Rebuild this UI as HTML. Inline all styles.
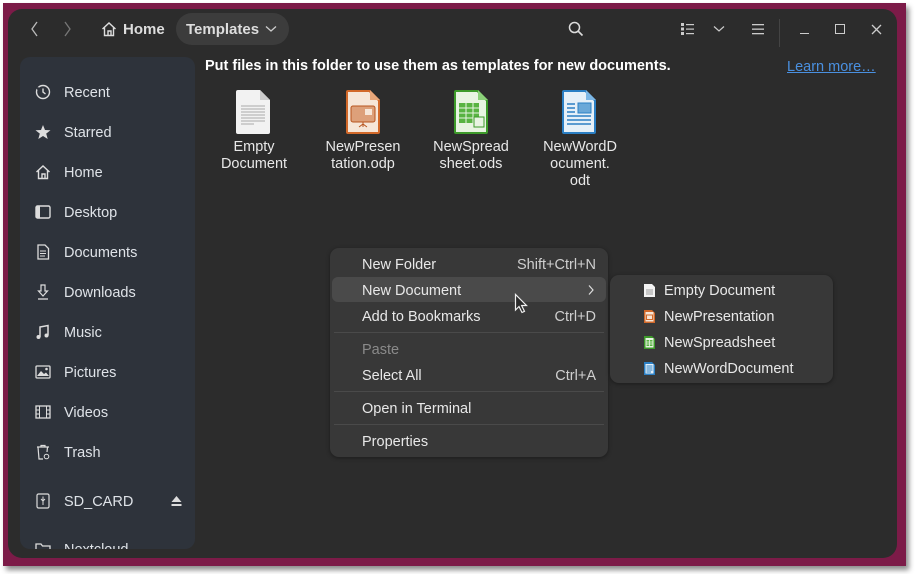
<!DOCTYPE html>
<html><head><style>
*{margin:0;padding:0;box-sizing:border-box}
body{width:915px;height:574px;background:#fff;position:relative;overflow:hidden;font-family:"Liberation Sans","DejaVu Sans",sans-serif;font-size:14px;color:#e8e8e8}
.frame{position:absolute;left:3px;top:3px;width:903px;height:563px;background:#7c1b48;box-shadow:3px 4px 5px rgba(0,0,0,.45)}
.win{position:absolute;left:8px;top:9px;width:889px;height:549px;background:#2c2c2c;border-radius:14px;overflow:hidden}
.abs{position:absolute}
.side{position:absolute;left:12px;top:48px;width:175px;height:492px;background:#2e333b;border-radius:10px;overflow:hidden}
.si{position:absolute;left:0;height:20px;line-height:20px;font-size:14.5px;color:#dfe3e8}
.si span{position:absolute;left:44px;white-space:nowrap;margin-top:1px}
.si svg{position:absolute;left:15px;top:2px}
.t{position:absolute;white-space:nowrap;margin-top:1px}
.menu{position:absolute;left:330px;top:248px;width:278px;height:209px;background:#383838;border-radius:9px;box-shadow:0 1px 4px rgba(0,0,0,.4)}
.mi{position:absolute;left:32px;font-size:14.5px;white-space:nowrap;margin-top:1px}
.sc{position:absolute;right:12px;font-size:14.5px;color:#cfcfcf;margin-top:1px}
.sep{position:absolute;left:4px;right:4px;height:1px;background:#4a4a4a}
.sub{position:absolute;left:610px;top:275px;width:223px;height:108px;background:#383838;border-radius:9px;box-shadow:0 1px 4px rgba(0,0,0,.4)}
.lbl{position:absolute;text-align:center;font-size:14.5px;line-height:17px;color:#e8e8e8;margin-top:1px}
</style></head><body>
<div class="frame"></div>
<div class="win">
 <svg class="abs" style="left:22px;top:12px" width="10" height="16"><path d="M7 1 L2 8 L7 15" stroke="#bbb" fill="none" stroke-width="1.3"/></svg>
 <svg class="abs" style="left:55px;top:12px" width="10" height="16"><path d="M2 1 L7 8 L2 15" stroke="#777" fill="none" stroke-width="1.3"/></svg>
 <svg class="abs" style="left:93px;top:12px" width="16" height="16"><path d="M1.5 8 L8 2 L14.5 8 M3.5 6.5 V14.5 H12.5 V6.5 M7 14.5 V10 H10 V14.5" stroke="#ddd" fill="none" stroke-width="1.4"/></svg>
 <div class="t" style="left:115px;top:11px;font-size:15px;font-weight:bold;color:#ddd">Home</div>
 <div class="abs" style="left:168px;top:4px;width:113px;height:32px;border-radius:16px;background:#3c3c3c"></div>
 <div class="t" style="left:178px;top:11px;font-size:15px;font-weight:bold;color:#ddd">Templates</div>
 <svg class="abs" style="left:257px;top:16px" width="12" height="8"><path d="M1 1.5 L6 6 L11 1.5" stroke="#ccc" fill="none" stroke-width="1.3"/></svg>
 <svg class="abs" style="left:560px;top:12px" width="16" height="16"><circle cx="6.5" cy="6.5" r="5" stroke="#ddd" fill="none" stroke-width="1.5"/><path d="M10 10 L14.5 14.5" stroke="#ddd" stroke-width="1.6"/></svg>
 <svg class="abs" style="left:672px;top:13px" width="16" height="14"><g fill="#ccc"><rect x="1" y="1" width="3" height="3"/><rect x="1" y="5.5" width="3" height="3"/><rect x="1" y="10" width="3" height="3"/><rect x="6" y="2" width="8" height="1.2"/><rect x="6" y="6.5" width="8" height="1.2"/><rect x="6" y="11" width="8" height="1.2"/></g></svg>
 <svg class="abs" style="left:705px;top:16px" width="12" height="8"><path d="M1 1.5 L6 6 L11 1.5" stroke="#ccc" fill="none" stroke-width="1.2"/></svg>
 <svg class="abs" style="left:743px;top:13px" width="14" height="14"><g fill="#ccc"><rect x="1" y="2" width="12" height="1.3"/><rect x="1" y="6.5" width="12" height="1.3"/><rect x="1" y="11" width="12" height="1.3"/></g></svg>
 <div class="abs" style="left:771px;top:10px;width:1px;height:28px;background:#444"></div>
 <div class="abs" style="left:792px;top:24px;width:9px;height:1.3px;background:#ccc"></div>
 <div class="abs" style="left:827px;top:15px;width:10px;height:10px;border:1.3px solid #ccc"></div>
 <svg class="abs" style="left:863px;top:15px" width="11" height="11"><path d="M1 1 L10 10 M10 1 L1 10" stroke="#ccc" stroke-width="1.3"/></svg>

 <div class="side">
  <div class="si" style="top:25px"><svg width="16" height="16"><circle cx="8" cy="8" r="6.5" stroke="#ddd" fill="none" stroke-width="1.4"/><path d="M8 4.5 V8 L10.5 10" stroke="#ddd" fill="none" stroke-width="1.4"/><path d="M0.5 3 L2.5 6 L5 3.5" fill="#2e333b"/></svg><span>Recent</span></div>
  <div class="si" style="top:65px"><svg width="16" height="16"><path d="M8 1 L10 6 L15.5 6.2 L11.2 9.6 L12.7 15 L8 12 L3.3 15 L4.8 9.6 L.5 6.2 L6 6Z" fill="#ddd"/></svg><span>Starred</span></div>
  <div class="si" style="top:105px"><svg width="16" height="16"><path d="M1.5 8 L8 2 L14.5 8 M3.5 6.5 V14.5 H12.5 V6.5 M7 14.5 V10 H10 V14.5" stroke="#ddd" fill="none" stroke-width="1.4"/></svg><span>Home</span></div>
  <div class="si" style="top:145px"><svg width="16" height="16"><rect x="1" y="2" width="14" height="12" rx="1.5" stroke="#ddd" fill="none" stroke-width="1.4"/><rect x="1" y="2" width="4" height="12" fill="#ddd"/></svg><span>Desktop</span></div>
  <div class="si" style="top:185px"><svg width="16" height="16"><path d="M3 1 H10 L13.5 4.5 V15 H3Z" stroke="#ddd" fill="none" stroke-width="1.3"/><path d="M5 7 H11 M5 9.5 H11 M5 12 H10" stroke="#ddd"/></svg><span>Documents</span></div>
  <div class="si" style="top:225px"><svg width="16" height="16"><path d="M6 1 H10 V7 H12.5 L8 12 L3.5 7 H6Z" stroke="#ddd" fill="none" stroke-width="1.2"/><path d="M3 15 H13" stroke="#ddd" stroke-width="1.3"/></svg><span>Downloads</span></div>
  <div class="si" style="top:265px"><svg width="16" height="16"><path d="M5 13 V3 L13 1.5 V11.5" stroke="#ddd" fill="none" stroke-width="1.5"/><circle cx="3.5" cy="13" r="2" fill="#ddd"/><circle cx="11.5" cy="11.5" r="2" fill="#ddd"/></svg><span>Music</span></div>
  <div class="si" style="top:305px"><svg width="16" height="16"><rect x="1" y="2" width="14" height="12" rx="1" stroke="#ddd" fill="none" stroke-width="1.3"/><path d="M2 12 L6 7 L9 10 L11 8.5 L14 12Z" fill="#ddd"/><circle cx="11.5" cy="5" r="1.3" fill="#ddd"/></svg><span>Pictures</span></div>
  <div class="si" style="top:345px"><svg width="16" height="16"><rect x="1" y="2" width="14" height="12" stroke="#ddd" fill="none" stroke-width="1.3"/><path d="M4.5 2 V14 M11.5 2 V14 M1 6 H4.5 M1 10 H4.5 M11.5 6 H15 M11.5 10 H15" stroke="#ddd"/></svg><span>Videos</span></div>
  <div class="si" style="top:385px"><svg width="16" height="16"><path d="M2 3 H14 M6 3 V1.5 H10 V3 M3 3 L4 15 H8 M12.5 3 L12 8" stroke="#ddd" fill="none" stroke-width="1.2"/><circle cx="11.5" cy="12.5" r="2.3" stroke="#ddd" fill="none"/></svg><span>Trash</span></div>
  <div class="si" style="top:434px"><svg width="16" height="16"><rect x="2" y="1" width="12" height="14" rx="1.5" stroke="#ddd" fill="none" stroke-width="1.2"/><path d="M8 3.5 V12 M6 6 L8 8 L10 6" stroke="#ddd" fill="none"/></svg><span>SD_CARD</span>
   <svg style="left:151px;top:5px" width="11" height="10"><path d="M5.5 0 L10.5 6 H.5Z M.5 8 H10.5 V10 H.5Z" fill="#ddd"/></svg></div>
  <div class="si" style="top:482px"><svg width="16" height="16"><path d="M1 3 H6 L7.5 5 H15 V14 H1Z" stroke="#ddd" fill="none" stroke-width="1.3"/></svg><span>Nextcloud</span></div>
 </div>

 <div class="t" style="left:197px;top:48px;font-size:14.5px;font-weight:bold;color:#fff">Put files in this folder to use them as templates for new documents.</div>
 <div class="t" style="left:779px;top:49px;font-size:14.5px;color:#4a90e0;text-decoration:underline">Learn more…</div>

 <svg class="abs" style="left:226px;top:80px" width="38" height="46"><path d="M2 3 Q2 1 4 1 H26 L36 11 V43 Q36 45 34 45 H4 Q2 45 2 43Z" fill="#f2f2f2"/><path d="M26 1 V11 H36" fill="#ccc"/><g stroke="#aaa"><path d="M7 17 H31 M7 20 H31 M7 23 H31 M7 26 H31 M7 29 H31 M7 32 H31 M7 35 H20"/></g></svg>
 <div class="lbl" style="left:200px;top:129px;width:92px">Empty<br>Document</div>

 <svg class="abs" style="left:336px;top:80px" width="38" height="46"><path d="M2 3 Q2 1 4 1 H26 L36 11 V43 Q36 45 34 45 H4 Q2 45 2 43Z" fill="#d2692a"/><path d="M4 3 H25 L34 12 V43 H4Z" fill="#f6e6d8"/><path d="M26 1 V11 H36" fill="#e9a77a"/><rect x="7" y="17" width="24" height="16" rx="2" fill="#dda07a" stroke="#b8551f"/><path d="M19 33 V38 M15 38 L19 35 L23 38" stroke="#b8551f" fill="none"/><rect x="21" y="20" width="7" height="6" fill="#f6e6d8"/></svg>
 <div class="lbl" style="left:309px;top:129px;width:92px">NewPresen<br>tation.odp</div>

 <svg class="abs" style="left:444px;top:80px" width="38" height="46"><path d="M2 3 Q2 1 4 1 H26 L36 11 V43 Q36 45 34 45 H4 Q2 45 2 43Z" fill="#3d9a2a"/><path d="M4 3 H25 L34 12 V43 H4Z" fill="#e8f4e2"/><path d="M26 1 V11 H36" fill="#8cd17a"/><rect x="7" y="14" width="20" height="20" fill="#58b342"/><g stroke="#e8f4e2"><path d="M7 19 H27 M7 24 H27 M7 29 H27 M14 14 V34 M21 14 V34"/></g><rect x="22" y="28" width="10" height="10" fill="#e8f4e2" stroke="#3d9a2a"/></svg>
 <div class="lbl" style="left:417px;top:129px;width:92px">NewSpread<br>sheet.ods</div>

 <svg class="abs" style="left:552px;top:80px" width="38" height="46"><path d="M2 3 Q2 1 4 1 H26 L36 11 V43 Q36 45 34 45 H4 Q2 45 2 43Z" fill="#2b7fc4"/><path d="M4 3 H25 L34 12 V43 H4Z" fill="#e6f0f8"/><path d="M26 1 V11 H36" fill="#7cb7e6"/><rect x="18" y="14" width="13" height="10" fill="#6aa8d8" stroke="#2b7fc4"/><g stroke="#2b7fc4" stroke-width="1.6"><path d="M7 15 H15 M7 19 H15 M7 23 H15 M7 27 H31 M7 31 H31 M7 35 H31"/></g></svg>
 <div class="lbl" style="left:526px;top:129px;width:92px">NewWordD<br>ocument.<br>odt</div>
</div>

<div class="menu">
 <div class="abs" style="left:2px;top:29px;width:274px;height:25px;background:#4a4a4a;border-radius:6px"></div>
 <div class="mi" style="top:8px">New Folder</div><div class="sc" style="top:8px">Shift+Ctrl+N</div>
 <div class="mi" style="top:34px">New Document</div>
 <svg class="abs" style="left:257px;top:36px" width="8" height="12"><path d="M2 1.5 L6 6 L2 10.5" stroke="#ddd" fill="none" stroke-width="1.2"/></svg>
 <div class="mi" style="top:60px">Add to Bookmarks</div><div class="sc" style="top:60px">Ctrl+D</div>
 <div class="sep" style="top:84px"></div>
 <div class="mi" style="top:93px;color:#8a8a8a">Paste</div>
 <div class="mi" style="top:119px">Select All</div><div class="sc" style="top:119px">Ctrl+A</div>
 <div class="sep" style="top:143px"></div>
 <div class="mi" style="top:152px">Open in Terminal</div>
 <div class="sep" style="top:176px"></div>
 <div class="mi" style="top:185px">Properties</div>
</div>
<svg class="abs" style="left:514px;top:293px" width="16" height="22"><path d="M1.5 1.5 V17 L5 13.5 L8 19.5 L10.5 18.3 L7.6 12.5 H12.5Z" fill="#2a2a2a" stroke="#eee" stroke-width="1.2"/></svg>

<div class="sub">
 <svg class="abs" style="left:33px;top:8px" width="13" height="15"><path d="M1 1 H9 L12 4 V14 H1Z" fill="#f2f2f2"/><path d="M3 7 H10 M3 9 H10 M3 11 H10" stroke="#999"/></svg>
 <div class="mi" style="left:54px;top:7px">Empty Document</div>
 <svg class="abs" style="left:33px;top:34px" width="13" height="15"><path d="M1 1 H9 L12 4 V14 H1Z" fill="#d2692a"/><rect x="2.5" y="3" width="8" height="9.5" fill="#f6e6d8"/><rect x="3.5" y="6" width="6" height="4.5" fill="none" stroke="#d2692a"/></svg>
 <div class="mi" style="left:54px;top:33px">NewPresentation</div>
 <svg class="abs" style="left:33px;top:60px" width="13" height="15"><path d="M1 1 H9 L12 4 V14 H1Z" fill="#3d9a2a"/><rect x="2.5" y="3" width="8" height="9.5" fill="#e8f4e2"/><rect x="3.5" y="5" width="6" height="6" fill="#58b342"/><path d="M3.5 7 H9.5 M3.5 9 H9.5 M6.5 5 V11" stroke="#e8f4e2" stroke-width=".8"/></svg>
 <div class="mi" style="left:54px;top:59px">NewSpreadsheet</div>
 <svg class="abs" style="left:33px;top:86px" width="13" height="15"><path d="M1 1 H9 L12 4 V14 H1Z" fill="#2b7fc4"/><rect x="2.5" y="3" width="8" height="9.5" fill="#e6f0f8"/><path d="M3.5 5 H9.5 M3.5 7 H9.5 M3.5 9 H9.5 M3.5 11 H8" stroke="#2b7fc4"/></svg>
 <div class="mi" style="left:54px;top:85px">NewWordDocument</div>
</div>
</body></html>
